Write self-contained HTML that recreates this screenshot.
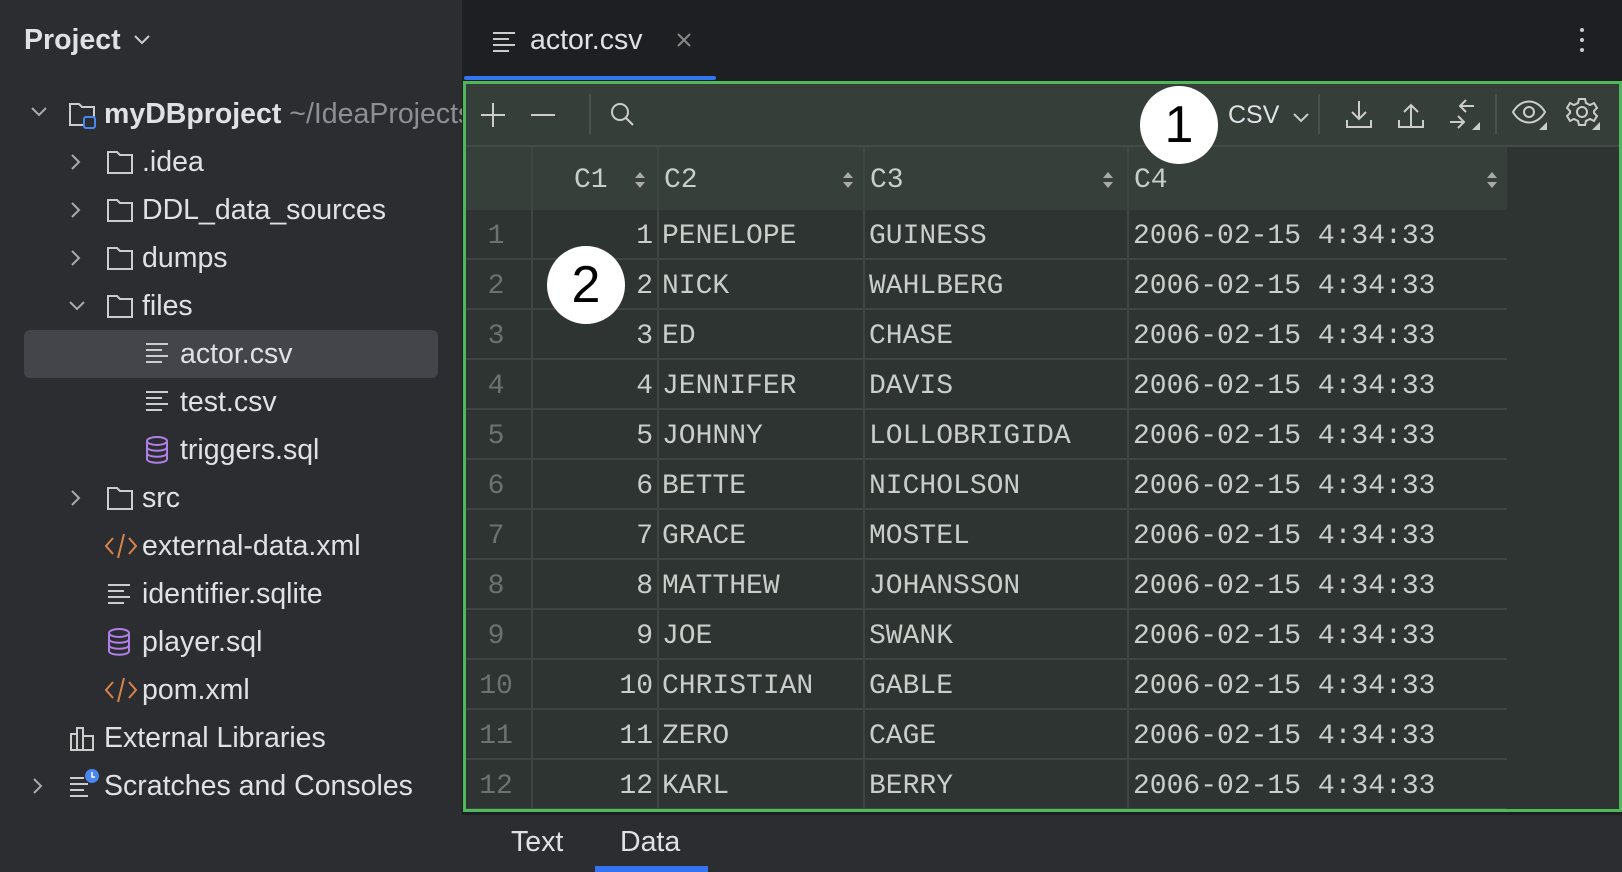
<!DOCTYPE html>
<html><head><meta charset="utf-8"><style>
*{margin:0;padding:0;box-sizing:border-box}
body{width:1622px;height:872px;overflow:hidden;background:#2b2d30;font-family:"Liberation Sans",sans-serif;color:#dfe1e5;position:relative}
.a{position:absolute}
.side{left:0;top:0;width:462px;height:872px;background:#2b2d30;overflow:hidden}
.t{position:absolute;font-size:28.5px;white-space:nowrap;line-height:32px}
.ed{left:462px;top:0;width:1160px;height:872px;background:#1e1f22}
.grid{left:463px;top:81px;width:1159px;height:731px;border:3px solid #4fb85b;background:#2d3431;overflow:hidden}
.mono{font-family:"Liberation Mono",monospace;font-size:28px;color:#c9cecb}
svg{position:absolute}
</style></head><body>
<div class="a side">
  <div class="t" style="left:24px;top:24px;font-weight:bold">Project</div>
  <svg style="left:133px;top:34px" width="18" height="12"><path d="M2 2l7 7 7-7" stroke="#ccc" stroke-width="2" fill="none"/></svg>
  <div class="a" style="left:24px;top:330px;width:414px;height:48px;background:#43454a;border-radius:6px"></div>
  <svg style="left:30px;top:106px" width="18" height="12"><path d="M2 2l7 7 7-7" stroke="#aaa" stroke-width="2" fill="none"/></svg>
  <svg style="left:70px;top:153px" width="12" height="18"><path d="M2 2l7 7-7 7" stroke="#aaa" stroke-width="2" fill="none"/></svg>
  <svg style="left:70px;top:201px" width="12" height="18"><path d="M2 2l7 7-7 7" stroke="#aaa" stroke-width="2" fill="none"/></svg>
  <svg style="left:70px;top:249px" width="12" height="18"><path d="M2 2l7 7-7 7" stroke="#aaa" stroke-width="2" fill="none"/></svg>
  <svg style="left:68px;top:300px" width="18" height="12"><path d="M2 2l7 7 7-7" stroke="#aaa" stroke-width="2" fill="none"/></svg>
  <svg style="left:70px;top:489px" width="12" height="18"><path d="M2 2l7 7-7 7" stroke="#aaa" stroke-width="2" fill="none"/></svg>
  <svg style="left:32px;top:777px" width="12" height="18"><path d="M2 2l7 7-7 7" stroke="#aaa" stroke-width="2" fill="none"/></svg>
  <svg style="left:68px;top:100px" width="32" height="30"><path d="M2 4h9l3 3h12v18H2z" stroke="#ccc" stroke-width="2" fill="none"/><rect x="16" y="17" width="11" height="11" rx="2" fill="#2b2d30" stroke="#4a86f0" stroke-width="2"/></svg>
  <svg style="left:106px;top:149px" width="30" height="28"><path d="M2 3h9l3 3h12v18H2z" stroke="#ccc" stroke-width="2" fill="none"/></svg>
  <svg style="left:106px;top:197px" width="30" height="28"><path d="M2 3h9l3 3h12v18H2z" stroke="#ccc" stroke-width="2" fill="none"/></svg>
  <svg style="left:106px;top:245px" width="30" height="28"><path d="M2 3h9l3 3h12v18H2z" stroke="#ccc" stroke-width="2" fill="none"/></svg>
  <svg style="left:106px;top:293px" width="30" height="28"><path d="M2 3h9l3 3h12v18H2z" stroke="#ccc" stroke-width="2" fill="none"/></svg>
  <svg style="left:106px;top:485px" width="30" height="28"><path d="M2 3h9l3 3h12v18H2z" stroke="#ccc" stroke-width="2" fill="none"/></svg>
  <svg style="left:145px;top:341px" width="26" height="24"><path d="M1 3h22M1 9h16M1 15h22M1 21h16" stroke="#ccc" stroke-width="2"/></svg>
  <svg style="left:145px;top:389px" width="26" height="24"><path d="M1 3h22M1 9h16M1 15h22M1 21h16" stroke="#ccc" stroke-width="2"/></svg>
  <svg style="left:107px;top:582px" width="26" height="24"><path d="M1 3h22M1 9h16M1 15h22M1 21h16" stroke="#ccc" stroke-width="2"/></svg>
  <svg style="left:145px;top:435px" width="26" height="30"><ellipse cx="12" cy="6" rx="10" ry="4" stroke="#b07fe8" stroke-width="2" fill="none"/><path d="M2 6v18c0 5 20 5 20 0V6M2 12c0 5 20 5 20 0M2 18c0 5 20 5 20 0" stroke="#b07fe8" stroke-width="2" fill="none"/></svg>
  <svg style="left:107px;top:627px" width="26" height="30"><ellipse cx="12" cy="6" rx="10" ry="4" stroke="#b07fe8" stroke-width="2" fill="none"/><path d="M2 6v18c0 5 20 5 20 0V6M2 12c0 5 20 5 20 0M2 18c0 5 20 5 20 0" stroke="#b07fe8" stroke-width="2" fill="none"/></svg>
  <svg style="left:104px;top:531px" width="34" height="30"><path d="M9 7L2 15l7 8M25 7l7 8-7 8M20 3l-6 24" stroke="#d9834a" stroke-width="2" fill="none"/></svg>
  <svg style="left:104px;top:675px" width="34" height="30"><path d="M9 7L2 15l7 8M25 7l7 8-7 8M20 3l-6 24" stroke="#d9834a" stroke-width="2" fill="none"/></svg>
  <svg style="left:69px;top:724px" width="28" height="28"><path d="M2 10h6v16H2zM8 4h6v22H8zM14 12h10v14H14z" stroke="#ccc" stroke-width="2" fill="none"/></svg>
  <svg style="left:69px;top:768px" width="32" height="30"><path d="M1 10h14M1 16h18M1 22h14M1 28h18" stroke="#ccc" stroke-width="2"/><circle cx="23" cy="8" r="7" fill="#4a86f0"/><path d="M23 4v5h3" stroke="#fff" stroke-width="1.5" fill="none"/></svg>
  <div class="t" style="left:104px;top:98px;font-weight:bold">myDBproject <span style="font-weight:normal;color:#8c8f94">~/IdeaProjects</span></div>
  <div class="t" style="left:142px;top:146px">.idea</div>
  <div class="t" style="left:142px;top:194px">DDL_data_sources</div>
  <div class="t" style="left:142px;top:242px">dumps</div>
  <div class="t" style="left:142px;top:290px">files</div>
  <div class="t" style="left:180px;top:338px">actor.csv</div>
  <div class="t" style="left:180px;top:386px">test.csv</div>
  <div class="t" style="left:180px;top:434px">triggers.sql</div>
  <div class="t" style="left:142px;top:482px">src</div>
  <div class="t" style="left:142px;top:530px">external-data.xml</div>
  <div class="t" style="left:142px;top:578px">identifier.sqlite</div>
  <div class="t" style="left:142px;top:626px">player.sql</div>
  <div class="t" style="left:142px;top:674px">pom.xml</div>
  <div class="t" style="left:104px;top:722px">External Libraries</div>
  <div class="t" style="left:104px;top:770px">Scratches and Consoles</div>
</div>
<div class="a ed"></div>
<svg style="left:492px;top:30px" width="26" height="24"><path d="M1 3h22M1 9h16M1 15h22M1 21h16" stroke="#ccc" stroke-width="2"/></svg>
<div class="t" style="left:530px;top:24px">actor.csv</div>
<svg style="left:676px;top:32px" width="16" height="16"><path d="M2 2l12 12M14 2L2 14" stroke="#888" stroke-width="2"/></svg>
<div class="a" style="left:1580px;top:28px;width:4px;height:4px;border-radius:2px;background:#ccc"></div>
<div class="a" style="left:1580px;top:38px;width:4px;height:4px;border-radius:2px;background:#ccc"></div>
<div class="a" style="left:1580px;top:48px;width:4px;height:4px;border-radius:2px;background:#ccc"></div>
<div class="a" style="left:464px;top:76px;width:252px;height:4px;background:#3574f0;border-radius:2px"></div>
<div class="a" style="left:462px;top:815px;width:1160px;height:57px;background:#2b2d30"></div>
<div class="t" style="left:511px;top:826px">Text</div>
<div class="t" style="left:620px;top:826px">Data</div>
<div class="a" style="left:595px;top:866px;width:113px;height:6px;background:#3574f0"></div>

<div class="a grid">
  <div class="a" style="left:0;top:0;width:1153px;height:63px;background:#363e3a;border-bottom:2px solid #434b47"></div>
  <svg style="left:12px;top:16px" width="30" height="30"><path d="M15 3v24M3 15h24" stroke="#ccc" stroke-width="2"/></svg>
  <svg style="left:62px;top:16px" width="30" height="30"><path d="M3 15h24" stroke="#ccc" stroke-width="2"/></svg>
  <div class="a" style="left:123px;top:10px;width:2px;height:40px;background:#4a524e"></div>
  <svg style="left:142px;top:16px" width="30" height="30"><circle cx="12" cy="12" r="8" stroke="#ccc" stroke-width="2" fill="none"/><path d="M18 18l7 7" stroke="#ccc" stroke-width="2"/></svg>
  <div class="t" style="left:762px;top:15px;font-size:25px">CSV</div>
  <svg style="left:826px;top:28px" width="18" height="12"><path d="M2 2l7 7 7-7" stroke="#ccc" stroke-width="2" fill="none"/></svg>
  <div class="a" style="left:852px;top:10px;width:2px;height:40px;background:#4a524e"></div>
  <svg style="left:878px;top:14px" width="30" height="32"><path d="M15 3v18M8 14l7 7 7-7M3 22v7h24v-7" stroke="#ccc" stroke-width="2" fill="none"/></svg>
  <svg style="left:930px;top:14px" width="30" height="32"><path d="M15 28V8M8 14l7-7 7 7M3 22v7h24v-7" stroke="#ccc" stroke-width="2" fill="none"/></svg>
  <svg style="left:980px;top:12px" width="36" height="36"><path d="M14 10h14M20 4l-6 6 6 6M4 26h14M12 20l6 6-6 6" stroke="#ccc" stroke-width="2" fill="none"/><path d="M34 26v8h-8z" fill="#ccc"/></svg>
  <div class="a" style="left:1029px;top:10px;width:2px;height:40px;background:#4a524e"></div>
  <svg style="left:1045px;top:12px" width="38" height="36"><path d="M2 16c8-14 24-14 32 0c-8 14-24 14-32 0z" stroke="#ccc" stroke-width="2" fill="none"/><circle cx="18" cy="16" r="5" stroke="#ccc" stroke-width="2" fill="none"/><path d="M36 26v8h-8z" fill="#ccc"/></svg>
  <svg style="left:1100px;top:12px" width="36" height="36"><circle cx="16" cy="16" r="5" stroke="#ccc" stroke-width="2" fill="none"/><path d="M13 3h6l1 4 4 2 4-2 3 5-3 3v2l3 3-3 5-4-2-4 2-1 4h-6l-1-4-4-2-4 2-3-5 3-3v-2L1 12l3-5 4 2 4-2z" stroke="#ccc" stroke-width="2" fill="none"/><path d="M34 26v8h-8z" fill="#ccc"/></svg>

  <div class="a" style="left:0;top:63px;width:1041px;height:63px;background:#373f3b"></div>
  <div class="a" style="left:1041px;top:63px;width:112px;height:665px;background:#2d3431"></div>
  <div id="rows"></div>
</div>
<div class="a" style="left:1140px;top:86px;width:78px;height:78px;border-radius:50%;background:#fff;color:#000;font-size:52px;text-align:center;line-height:78px">1</div>
<div class="a" style="left:547px;top:246px;width:78px;height:78px;border-radius:50%;background:#fff;color:#000;font-size:52px;text-align:center;line-height:78px">2</div>
<script>
var data=[["PENELOPE","GUINESS"],["NICK","WAHLBERG"],["ED","CHASE"],["JENNIFER","DAVIS"],["JOHNNY","LOLLOBRIGIDA"],["BETTE","NICHOLSON"],["GRACE","MOSTEL"],["MATTHEW","JOHANSSON"],["JOE","SWANK"],["CHRISTIAN","GABLE"],["ZERO","CAGE"],["KARL","BERRY"]];
var h='';
var cx=[0,65,191,397,661,1038];
for(var i=1;i<5;i++)h+='<div class="a" style="left:'+cx[i]+'px;top:63px;width:2px;height:665px;background:#3e4642"></div>';
h+='<div class="a mono" style="left:108px;top:81px">C1</div>';
h+='<div class="a mono" style="left:198px;top:81px">C2</div>';
h+='<div class="a mono" style="left:404px;top:81px">C3</div>';
h+='<div class="a mono" style="left:668px;top:81px">C4</div>';
[168,376,636,1020].forEach(function(x){h+='<svg style="left:'+x+'px;top:87px" width="12" height="18"><path d="M6 1l5 6H1zM6 17l5-6H1z" fill="#aaa"/></svg>';});
for(var r=0;r<12;r++){var y=126+r*50;
h+='<div class="a" style="left:0;top:'+(y+48)+'px;width:1041px;height:2px;background:#3e4642"></div>';
h+='<div class="a mono" style="left:0;top:'+(y+11)+'px;width:60px;text-align:center;color:#6b7370">'+(r+1)+'</div>';
h+='<div class="a mono" style="left:67px;top:'+(y+11)+'px;width:120px;text-align:right">'+(r+1)+'</div>';
h+='<div class="a mono" style="left:196px;top:'+(y+11)+'px">'+data[r][0]+'</div>';
h+='<div class="a mono" style="left:403px;top:'+(y+11)+'px">'+data[r][1]+'</div>';
h+='<div class="a mono" style="left:667px;top:'+(y+11)+'px">2006-02-15 4:34:33</div>';}
document.getElementById('rows').outerHTML=h;
</script>
</body></html>
